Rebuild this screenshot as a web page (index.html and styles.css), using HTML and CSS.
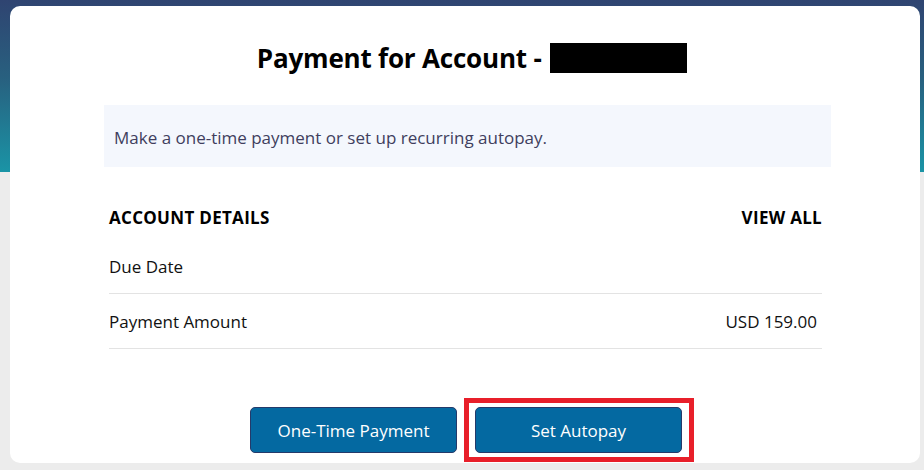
FILE: index.html
```html
<!DOCTYPE html>
<html lang="en">
<head>
<meta charset="utf-8">
<title>Payment for Account</title>
<link rel="stylesheet" href="styles.css">
</head>
<body>
<div class="page">
  <main class="card">
    <h1 class="title">Payment for Account - <span class="redact"></span></h1>
    <div class="content">
      <p class="notice">Make a one-time payment or set up recurring autopay.</p>
      <section class="details">
        <div class="details-head">
          <span>ACCOUNT DETAILS</span>
          <span>VIEW ALL</span>
        </div>
        <div class="row row-first"><span>Due Date</span><span class="value"></span></div>
        <div class="row"><span>Payment Amount</span><span class="value">USD 159.00</span></div>
      </section>
    </div>
    <div class="actions">
      <button class="btn">One-Time Payment</button>
      <button class="btn btn-highlight">Set Autopay</button>
    </div>
  </main>
</div>
</body>
</html>
```

FILE: styles.css
```css
html, body {
  margin: 0;
  padding: 0;
}
body {
  width: 924px;
  height: 470px;
  overflow: hidden;
  font-family: "Open Sans", "Noto Sans", sans-serif;
  background: linear-gradient(180deg, #2f4471 0%, #28607f 45%, #1a94a6 100%) top / 100% 172px no-repeat, #ececec;
}
.page {
  padding: 6px 4px 0 10px;
}
.card {
  background: #fff;
  border-radius: 10px;
  height: 457px;
  box-sizing: border-box;
  padding-top: 36px;
  display: flex;
  flex-direction: column;
  align-items: center;
}
.title {
  margin: 0;
  padding-left: 14px;
  font-size: 26px;
  font-weight: 700;
  color: #000;
  line-height: 32px;
  display: flex;
  align-items: center;
  white-space: pre;
  letter-spacing: -0.2px;
}
.redact {
  display: inline-block;
  width: 137px;
  height: 30px;
  background: #000;
  margin-left: 2px;
}
.content {
  width: 727px;
  margin-top: 31px;
  margin-left: 5px;
}
.notice {
  margin: 0;
  background: #f4f7fd;
  height: 62px;
  display: flex;
  align-items: center;
  padding-left: 10px;
  padding-top: 2px;
  box-sizing: border-box;
  font-size: 17px;
  color: #403e5e;
}
.details {
  padding: 0 9px 0 5px;
  margin-top: 30px;
}
.details-head {
  display: flex;
  justify-content: space-between;
  font-weight: 700;
  font-size: 17px;
  letter-spacing: 0.3px;
  color: #000;
  height: 40px;
  align-items: center;
}
.row {
  display: flex;
  justify-content: space-between;
  align-items: center;
  height: 55px;
  box-sizing: border-box;
  border-bottom: 1px solid #e3e3e3;
  font-size: 17px;
  color: #111;
}
.row-first {
  height: 57px;
  padding-top: 2px;
}
.value {
  padding-right: 5px;
}
.actions {
  margin-top: 58px;
  display: flex;
  gap: 18px;
  margin-left: 2px;
}
.btn {
  width: 207px;
  height: 46px;
  background: #0469a1;
  color: #fff;
  border: 1px solid #253a6a;
  border-radius: 5px;
  font-family: inherit;
  font-size: 17px;
  padding: 0;
}
.btn-highlight {
  position: relative;
}
.btn-highlight::after {
  content: "";
  position: absolute;
  top: -10px;
  left: -12px;
  right: -13px;
  bottom: -10px;
  border: 5px solid #e81f2a;
  pointer-events: none;
}
```
